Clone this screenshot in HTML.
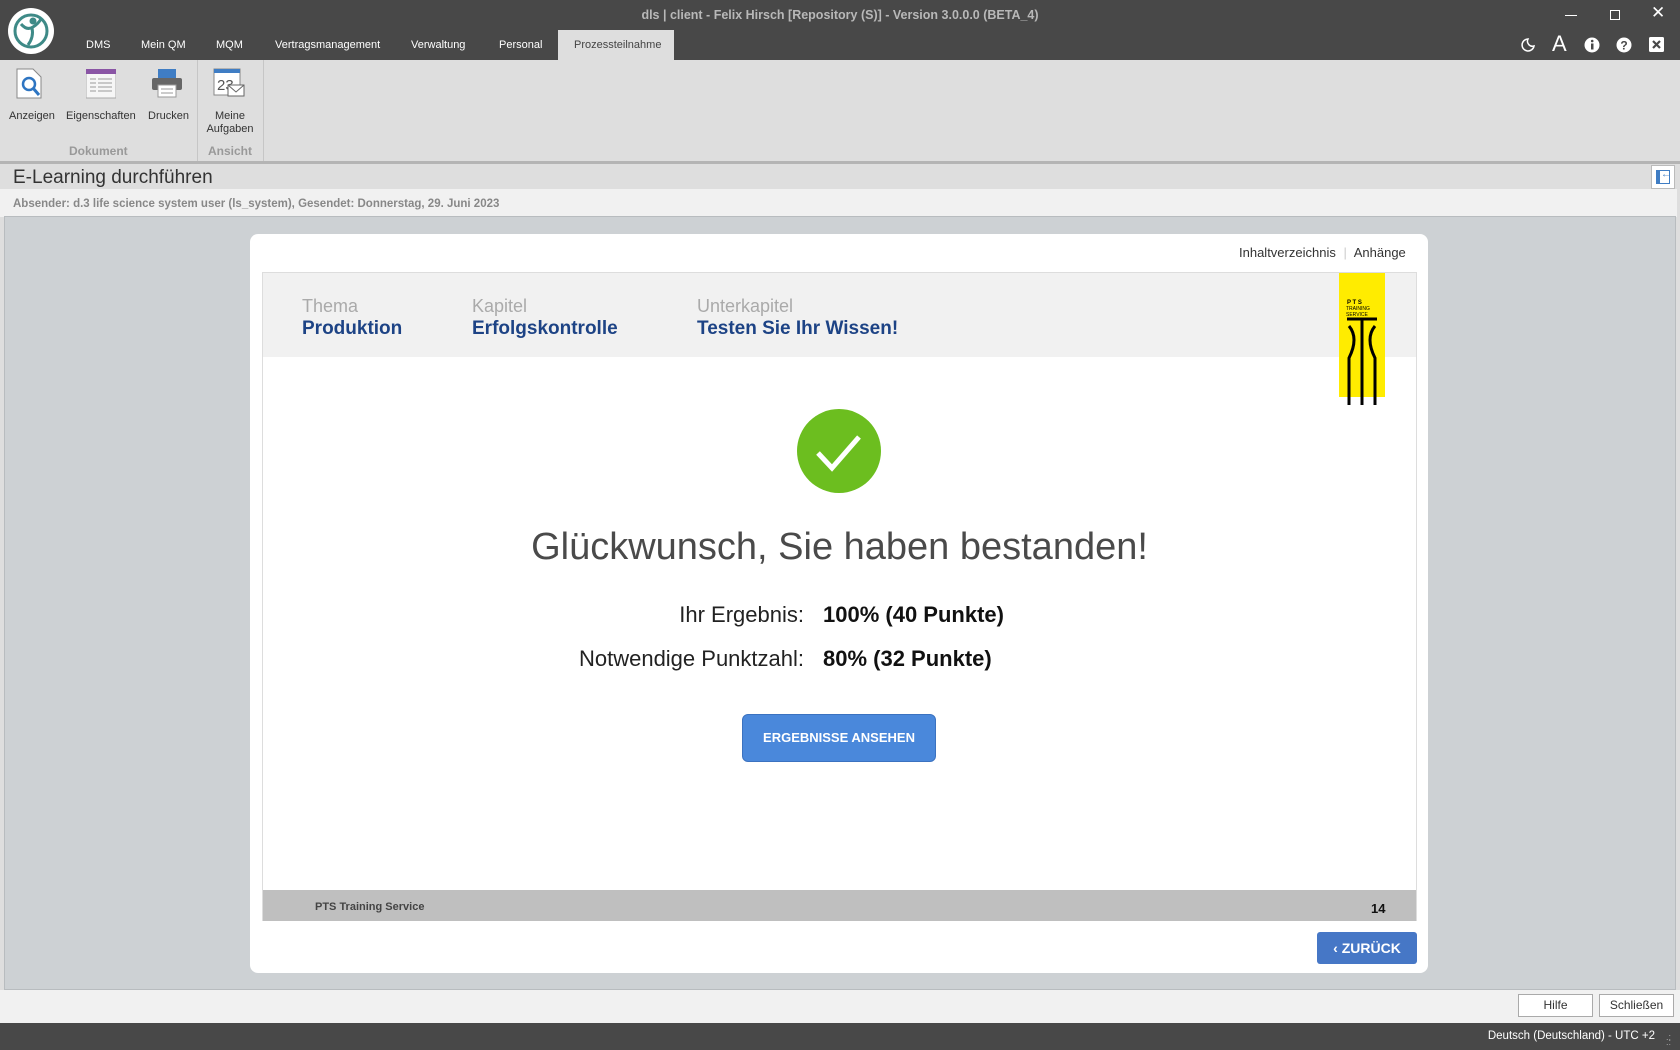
<!DOCTYPE html>
<html><head><meta charset="utf-8"><style>
*{margin:0;padding:0;box-sizing:border-box}
body{width:1680px;height:1050px;position:relative;overflow:hidden;font-family:"Liberation Sans",Arial,sans-serif;background:#dedede}
.a{position:absolute}
.tb{left:0;top:0;width:1680px;height:60px;background:#484848}
.tab{position:absolute;top:39px;font-size:11px;color:#fff}
.rl{position:absolute;top:110px;font-size:11px;color:#333;text-align:center}
.gl{position:absolute;top:144px;font-size:12px;color:#999;font-weight:bold}
.ic{position:absolute;top:36px;color:#fff}
</style></head><body>
<div class="a tb"></div>
<div class="a" style="left:0;top:8px;width:1680px;text-align:center;font-size:12.5px;font-weight:bold;color:#b8b8b8">dls | client - Felix Hirsch [Repository (S)] - Version 3.0.0.0 (BETA_4)</div>
<svg class="a" style="left:7px;top:7px" width="48" height="48" viewBox="0 0 48 48"><circle cx="24" cy="24" r="23" fill="#fff"/><circle cx="24" cy="24" r="16" fill="none" stroke="#3e8a87" stroke-width="3"/><circle cx="26" cy="14" r="3.5" fill="#3e8a87"/><path d="M14 17 Q20 24 26 20 Q31 17 34 12 M25 21 Q27 30 21 38" fill="none" stroke="#3e8a87" stroke-width="3"/></svg>
<div class="tab" style="left:86px">DMS</div>
<div class="tab" style="left:141px">Mein QM</div>
<div class="tab" style="left:216px">MQM</div>
<div class="tab" style="left:275px">Vertragsmanagement</div>
<div class="tab" style="left:411px">Verwaltung</div>
<div class="tab" style="left:499px">Personal</div>
<div class="a" style="left:558px;top:30px;width:116px;height:30px;background:#dedede"></div>
<div class="tab" style="left:574px;color:#444">Prozessteilnahme</div>
<div class="a" style="left:1565px;top:15px;width:12px;height:1px;background:#fff"></div>
<div class="a" style="left:1610px;top:10px;width:10px;height:10px;border:1.5px solid #fff"></div>
<div class="a" style="left:1651px;top:3px;color:#fff;font-size:17px">✕</div>
<svg class="a" style="left:1520px;top:37px" width="16" height="16" viewBox="0 0 16 16"><path d="M8 2 A6 6 0 1 0 14 9 A5 5 0 0 1 8 2Z" fill="none" stroke="#fff" stroke-width="1.5"/></svg>
<div class="ic" style="left:1552px;top:31px;font-size:22px">A</div>
<svg class="a" style="left:1584px;top:37px" width="16" height="16"><circle cx="8" cy="8" r="7.5" fill="#fff"/><rect x="7" y="6.5" width="2.5" height="6" fill="#484848"/><circle cx="8.2" cy="4" r="1.3" fill="#484848"/></svg>
<svg class="a" style="left:1616px;top:37px" width="16" height="16"><circle cx="8" cy="8" r="7.5" fill="#fff"/><text x="8" y="12.5" text-anchor="middle" font-size="12" font-weight="bold" fill="#484848" font-family="Liberation Sans">?</text></svg>
<svg class="a" style="left:1649px;top:37px" width="15" height="15"><rect width="15" height="15" rx="1.5" fill="#fff"/><path d="M4 4 L11 11 M11 4 L4 11" stroke="#484848" stroke-width="2.2"/></svg>

<svg class="a" style="left:16px;top:68px" width="30" height="32"><path d="M1 1 H17 L25 9 V30 H1Z" fill="#fff" stroke="#888"/><circle cx="13" cy="16" r="6" fill="none" stroke="#2e75c2" stroke-width="2.5"/><path d="M17 20 L23 27" stroke="#2e75c2" stroke-width="3"/></svg>
<svg class="a" style="left:86px;top:69px" width="30" height="30"><rect x="0" y="0" width="30" height="29" fill="#f6f6f6" stroke="#aaa"/><rect x="0" y="0" width="30" height="5" fill="#8a55a5"/><path d="M4 10h6M12 10h14M4 14h6M12 14h14M4 18h6M12 18h14M4 22h6M12 22h14" stroke="#999"/></svg>
<svg class="a" style="left:151px;top:68px" width="32" height="30"><rect x="7" y="1" width="18" height="10" fill="#3f7dc4"/><rect x="1" y="10" width="30" height="12" rx="2" fill="#666"/><rect x="7" y="17" width="18" height="12" fill="#fff" stroke="#999"/><path d="M10 21h12M10 25h12" stroke="#999"/></svg>
<svg class="a" style="left:213px;top:66px" width="34" height="34"><rect x="1" y="3" width="26" height="26" fill="#fff" stroke="#888"/><rect x="1" y="3" width="26" height="4" fill="#3f7dc4"/><text x="4" y="24" font-size="15" fill="#555" font-family="Liberation Sans">23</text><rect x="15" y="19" width="16" height="11" fill="#fff" stroke="#666"/><path d="M15 19 L23 26 L31 19" fill="none" stroke="#666"/></svg>
<div class="rl" style="left:9px">Anzeigen</div>
<div class="rl" style="left:66px">Eigenschaften</div>
<div class="rl" style="left:148px">Drucken</div>
<div class="rl" style="left:200px;width:60px;line-height:13px">Meine<br>Aufgaben</div>
<div class="gl" style="left:69px">Dokument</div>
<div class="gl" style="left:208px">Ansicht</div>
<div class="a" style="left:197px;top:60px;width:1px;height:101px;background:#c6c6c6"></div>
<div class="a" style="left:263px;top:60px;width:1px;height:101px;background:#c6c6c6"></div>
<div class="a" style="left:0;top:161px;width:1680px;height:3px;background:#b4b4b4"></div>

<div class="a" style="left:13px;top:167px;font-size:19px;color:#333">E-Learning durchführen</div>
<div class="a" style="left:1651px;top:165px;width:24px;height:24px;background:#fff;border:1px solid #bbb"></div>
<div class="a" style="left:1656px;top:170px;width:14px;height:14px;border:1px solid #3f7dc4;border-left:4px solid #3f7dc4"></div>
<div class="a" style="left:1661px;top:169px;font-size:10px;color:#3f7dc4">←</div>
<div class="a" style="left:0;top:189px;width:1677px;height:28px;background:#f1f1f1"></div>
<div class="a" style="left:13px;top:198px;font-size:11.5px;font-weight:bold;color:#888">Absender: d.3 life science system user (ls_system), Gesendet: Donnerstag, 29. Juni 2023</div>
<div class="a" style="left:4px;top:216px;width:1672px;height:774px;background:#cdd1d4;border:1px solid #b8bcbf"></div>
<div class="a" style="left:0;top:990px;width:1680px;height:33px;background:#f1f1f1"></div>
<div class="a" style="left:1518px;top:994px;width:75px;height:23px;background:#fff;border:1px solid #aaa;font-size:12px;text-align:center;line-height:21px;color:#333">Hilfe</div>
<div class="a" style="left:1599px;top:994px;width:75px;height:23px;background:#fff;border:1px solid #aaa;font-size:12px;text-align:center;line-height:21px;color:#333">Schließen</div>
<div class="a" style="left:0;top:1023px;width:1680px;height:27px;background:#484848"></div>
<div class="a" style="left:1430px;width:225px;text-align:right;top:1030px;font-size:11.5px;color:#fff">Deutsch (Deutschland) - UTC +2</div>
<div class="a" style="left:1666px;top:1035px;font-size:9px;color:#aaa;line-height:5px">.:<br>.:</div>

<div class="a" style="left:250px;top:234px;width:1178px;height:739px;background:#fff;border-radius:8px"></div>
<div class="a" style="left:1239px;top:245px;font-size:13px;color:#333">Inhaltverzeichnis <span style="color:#ccc;padding:0 4px">|</span> Anhänge</div>
<div class="a" style="left:262px;top:272px;width:1155px;height:649px;border:1px solid #ddd;background:#fff"></div>
<div class="a" style="left:263px;top:273px;width:1153px;height:84px;background:#f1f1f1"></div>
<div class="a" style="left:302px;top:296px;font-size:18px;color:#aaa">Thema</div>
<div class="a" style="left:302px;top:318px;font-size:19px;font-weight:bold;color:#1d4385">Produktion</div>
<div class="a" style="left:472px;top:296px;font-size:18px;color:#aaa">Kapitel</div>
<div class="a" style="left:472px;top:318px;font-size:19px;font-weight:bold;color:#1d4385">Erfolgskontrolle</div>
<div class="a" style="left:697px;top:296px;font-size:18px;color:#aaa">Unterkapitel</div>
<div class="a" style="left:697px;top:318px;font-size:19px;font-weight:bold;color:#1d4385">Testen Sie Ihr Wissen!</div>
<svg class="a" style="left:1339px;top:273px" width="48" height="134"><rect width="46" height="124" fill="#ffec00"/><text x="8" y="31" font-size="6" font-weight="bold" font-family="Liberation Sans">P   T   S</text><text x="7" y="37" font-size="5" font-family="Liberation Sans">TRAINING</text><text x="7" y="43" font-size="5" font-family="Liberation Sans">SERVICE</text><path d="M8 46 H38 M23 46 V132 M10 53 Q20 65 10 85 V132 M36 53 Q26 65 36 85 V132" fill="none" stroke="#000" stroke-width="3"/></svg>
<svg class="a" style="left:796px;top:408px" width="86" height="86"><circle cx="43" cy="43" r="42" fill="#6cbe1f"/><path d="M22 45 L36 60 L63 29" fill="none" stroke="#fff" stroke-width="5"/></svg>
<div class="a" style="left:262px;top:526px;width:1155px;text-align:center;font-size:38px;color:#4a4a4a">Glückwunsch, Sie haben bestanden!</div>
<div class="a" style="left:400px;top:602px;width:404px;text-align:right;font-size:22px;color:#222">Ihr Ergebnis:</div>
<div class="a" style="left:823px;top:602px;font-size:22px;font-weight:bold;color:#111">100% (40 Punkte)</div>
<div class="a" style="left:400px;top:646px;width:404px;text-align:right;font-size:22px;color:#222">Notwendige Punktzahl:</div>
<div class="a" style="left:823px;top:646px;font-size:22px;font-weight:bold;color:#111">80% (32 Punkte)</div>
<div class="a" style="left:742px;top:714px;width:194px;height:48px;background:#4a88db;border:1px solid #3b72c0;border-radius:6px;color:#fff;font-size:13px;font-weight:bold;text-align:center;line-height:46px">ERGEBNISSE ANSEHEN</div>
<div class="a" style="left:263px;top:890px;width:1153px;height:31px;background:#bfbfbf"></div>
<div class="a" style="left:315px;top:901px;font-size:11px;font-weight:bold;color:#444">PTS Training Service</div>
<div class="a" style="left:1371px;top:901px;font-size:13px;font-weight:bold;color:#111">14</div>
<div class="a" style="left:1317px;top:932px;width:100px;height:32px;background:#4677c6;border-radius:3px;color:#fff;font-size:14px;font-weight:bold;text-align:center;line-height:32px">‹ ZURÜCK</div>
</body></html>
